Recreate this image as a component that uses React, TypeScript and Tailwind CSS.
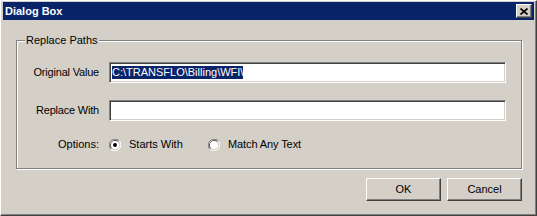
import React from "react";

const face = "bg-[#d4d0c8]";

const Radio = ({ checked }: { checked?: boolean }) => (
  <svg width="12" height="12" viewBox="0 0 12 12" className="shrink-0">
    <path d="M10.24 1.76A6 6 0 0 0 1.76 10.24" fill="none" stroke="#808080" strokeWidth="1" />
    <path d="M9.5 2.5A5 5 0 0 0 2.5 9.5" fill="none" stroke="#404040" strokeWidth="1" />
    <path d="M1.76 10.24A6 6 0 0 0 10.24 1.76" fill="none" stroke="#ffffff" strokeWidth="1" />
    <path d="M2.5 9.5A5 5 0 0 0 9.5 2.5" fill="none" stroke="#d4d0c8" strokeWidth="1" />
    <circle cx="6" cy="6" r="4" fill="#ffffff" />
    {checked && <circle cx="6" cy="6" r="2" fill="#000000" />}
  </svg>
);

const Field = ({ children }: { children?: React.ReactNode }) => (
  <div className="flex-1 h-[21px] bg-white border border-t-[#808080] border-l-[#808080] border-b-white border-r-white shadow-[inset_1px_1px_0_#404040,inset_-1px_-1px_0_#d4d0c8] flex items-center px-[2px]">
    {children}
  </div>
);

const Button = ({ label }: { label: string }) => (
  <button className={`w-[75px] h-[23px] ${face} border border-t-white border-l-white border-b-[#404040] border-r-[#404040] shadow-[inset_-1px_-1px_0_#808080] text-[11px] text-black`}>
    {label}
  </button>
);

export default function App() {
  return (
    <div
      className={`w-[537px] h-[216px] ${face} border border-t-white border-l-white border-b-[#404040] border-r-[#404040] shadow-[inset_-1px_-1px_0_#808080] flex flex-col pt-[1px] px-[2px] text-black`}
      style={{ fontFamily: '"Liberation Sans", Arial, sans-serif' }}
    >
      {/* title bar */}
      <div className="h-[18px] bg-[#0a246a] flex items-center justify-between pl-[2px] pr-[2px]">
        <span className="text-white font-bold text-[11px]">Dialog Box</span>
        <button className={`w-[16px] h-[14px] ${face} border border-t-white border-l-white border-b-[#404040] border-r-[#404040] shadow-[inset_-1px_-1px_0_#808080] flex items-center justify-center`}>
          <svg width="8" height="7" viewBox="0 0 8 7">
            <path d="M0.5 0.5L7.5 6.5M7.5 0.5L0.5 6.5" stroke="#000" strokeWidth="1.6" fill="none" />
          </svg>
        </button>
      </div>

      <div className="flex flex-col pt-[14px] pl-[13px] pr-[12px] text-[11px]">
        <fieldset className="border border-[#808080] shadow-[1px_1px_0_#ffffff,inset_1px_1px_0_#ffffff] pt-[15px] pb-[17px] pr-[15px] m-0 min-w-0">
          <legend className={`ml-[8px] px-[1px] ${face} leading-[13px]`}>Replace Paths</legend>
          <div className="flex flex-col gap-[17px]">
            <div className="flex items-center gap-[10px]">
              <span className="w-[82px] text-right tracking-[-0.2px]">Original Value</span>
              <Field>
                <span className="bg-[#0a246a] text-white leading-[13px]">C:\TRANSFLO\Billing\WFI\</span>
              </Field>
            </div>
            <div className="flex items-center gap-[10px]">
              <span className="w-[82px] text-right tracking-[-0.2px]">Replace With</span>
              <Field />
            </div>
            <div className="flex items-center gap-[10px] h-[13px]">
              <span className="w-[82px] text-right">Options:</span>
              <div className="flex items-center">
                <label className="w-[99px] flex items-center gap-[8px]">
                  <Radio checked />
                  <span>Starts With</span>
                </label>
                <label className="flex items-center gap-[8px]">
                  <Radio />
                  <span className="tracking-[-0.1px]">Match Any Text</span>
                </label>
              </div>
            </div>
          </div>
        </fieldset>

        <div className="flex justify-end gap-[6px] mt-[9px]">
          <Button label="OK" />
          <Button label="Cancel" />
        </div>
      </div>
    </div>
  );
}
